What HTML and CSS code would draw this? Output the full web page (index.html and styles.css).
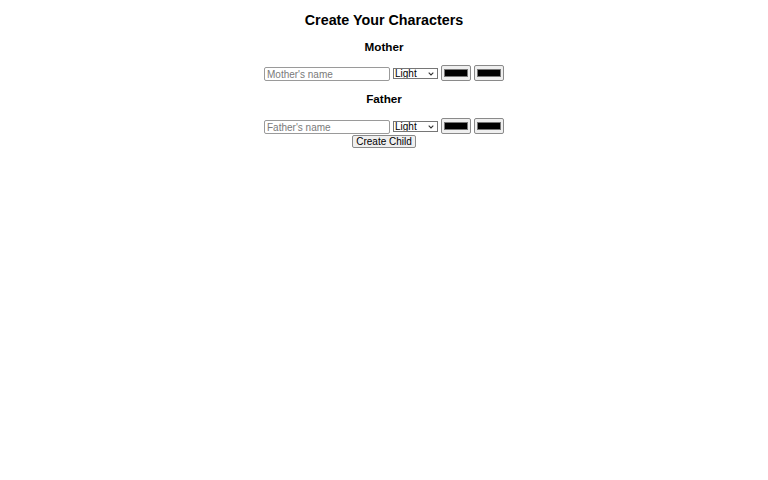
FILE: index.html
```html
<!DOCTYPE html>
<html lang="en">
<head>
<meta charset="utf-8">
<title>Create Your Characters</title>
<link rel="stylesheet" href="styles.css">
</head>
<body>
  <h2 class="title">Create Your Characters</h2>
  <section class="parent">
    <h3 class="parent-label">Mother</h3>
    <div class="fields">
      <input class="name" type="text" placeholder="Mother's name">
      <select class="tone">
        <option>Light</option>
        <option>Medium</option>
        <option>Dark</option>
      </select>
      <input class="swatch" type="color" value="#000000">
      <input class="swatch" type="color" value="#000000">
    </div>
  </section>
  <section class="parent">
    <h3 class="parent-label">Father</h3>
    <div class="fields">
      <input class="name" type="text" placeholder="Father's name">
      <select class="tone">
        <option>Light</option>
        <option>Medium</option>
        <option>Dark</option>
      </select>
      <input class="swatch" type="color" value="#000000">
      <input class="swatch" type="color" value="#000000">
    </div>
  </section>
  <div class="actions">
    <button class="create" type="button">Create Child</button>
  </div>
</body>
</html>
```
FILE: styles.css
```css
body {
  margin: 0;
  padding: 12px 8px 8px;
  font-family: "Liberation Sans", Arial, sans-serif;
  font-size: 10px;
  text-align: center;
  color: #000;
  background: #fff;
}

.title {
  font-size: 14.3px;
  line-height: 17px;
  margin: 0 0 11px;
}

.parent-label {
  font-size: 11.7px;
  line-height: 14px;
  margin: 0 0 11px;
}

.parent + .parent .parent-label {
  margin: 10px 0 12px;
}

.fields {
  display: flex;
  justify-content: center;
  align-items: flex-start;
  gap: 3px;
  height: 17px;
}

.name,
.tone,
.create {
  font-family: "Liberation Sans", Arial, sans-serif;
  font-size: 10px;
  color: #000;
}

.name {
  box-sizing: border-box;
  width: 126px;
  height: 14px;
  margin-top: 2px;
  padding: 0 2px;
  border: 1px solid #9a9a9a;
  border-radius: 2px;
  background: #fff;
  outline: none;
}

.name::placeholder {
  color: #7a7a7a;
}

.tone {
  -webkit-appearance: none;
  appearance: none;
  box-sizing: border-box;
  width: 45px;
  height: 11px;
  margin-top: 3px;
  padding: 0 0 0 1px;
  border: 1px solid #767676;
  border-radius: 0;
  line-height: 9px;
  text-align: left;
  background: #fff url("data:image/svg+xml,%3Csvg xmlns='http://www.w3.org/2000/svg' width='6' height='4' viewBox='0 0 6 4'%3E%3Cpath d='M0.7 0.7 L3 3 L5.3 0.7' fill='none' stroke='%23333' stroke-width='1.1'/%3E%3C/svg%3E") no-repeat right 3px center;
}

.swatch {
  -webkit-appearance: none;
  appearance: none;
  box-sizing: border-box;
  width: 30px;
  height: 16px;
  margin: 0;
  padding: 3px 2px;
  border: 1px solid #8a8a8a;
  border-radius: 2px;
  background: #efefef;
  cursor: pointer;
}

.swatch::-webkit-color-swatch-wrapper {
  padding: 0;
}

.swatch::-webkit-color-swatch {
  border: 1px solid #777;
  border-radius: 0;
}

.actions {
  display: flex;
  justify-content: center;
}

.create {
  box-sizing: border-box;
  height: 13px;
  padding: 0 3px;
  border: 1px solid #8a8a8a;
  border-radius: 2px;
  background: #efefef;
  line-height: 11px;
}
```
